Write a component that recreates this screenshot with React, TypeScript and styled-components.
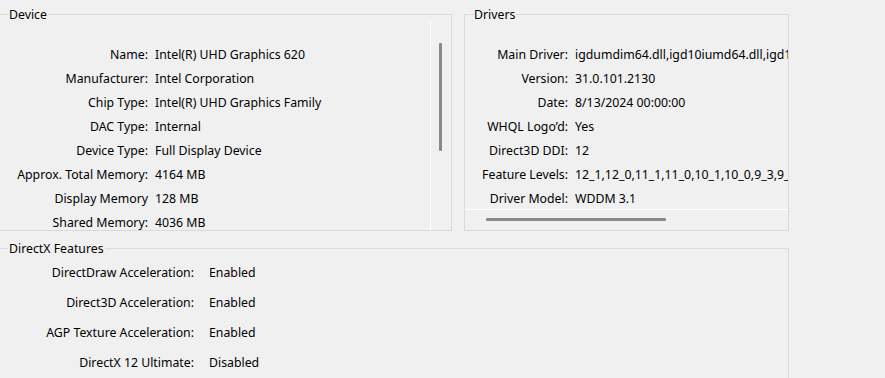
import styled, { createGlobalStyle } from "styled-components";

const GlobalStyle = createGlobalStyle`
	html, body {
		margin: 0;
		padding: 0;
		background: #f0f0f0;
		overflow: hidden;
	}
	body {
		font-family: "Noto Sans", "Segoe UI", sans-serif;
		font-size: 12.3px;
		color: #000;
	}
`;

const Page = styled.div`
	width: 885px;
	height: 378px;
	margin-left: -1px;
	padding-top: 14px;
	box-sizing: border-box;
	display: flex;
	flex-direction: column;
	gap: 17px;
	overflow: hidden;
`;

const TopRow = styled.div`
	display: flex;
	gap: 12px;
	align-items: flex-start;
`;

const Group = styled.section<{ w: number; h?: number }>`
	position: relative;
	width: ${(p) => p.w}px;
	height: ${(p) => (p.h ? p.h + "px" : "auto")};
	box-sizing: border-box;
	border: 1px solid #dadada;
	flex-shrink: 0;
`;

const Legend = styled.span`
	position: absolute;
	top: -8px;
	left: 8px;
	padding: 0 1px;
	line-height: 15px;
	background: #f0f0f0;
	white-space: nowrap;
`;

const ListView = styled.div<{ dir: "row" | "column" }>`
	margin-top: 7px;
	height: 208px;
	display: flex;
	flex-direction: ${(p) => p.dir};
	overflow: hidden;
`;

const Rows = styled.div<{ labelW: number; gap: number; rowH: number; top: number }>`
	flex: 1;
	min-width: 0;
	min-height: 0;
	overflow: hidden;
	padding-top: ${(p) => p.top}px;
	display: grid;
	grid-template-columns: ${(p) => p.labelW}px 1fr;
	grid-auto-rows: ${(p) => p.rowH}px;
	column-gap: ${(p) => p.gap}px;
	align-content: start;
	line-height: ${(p) => p.rowH}px;
`;

const Label = styled.div`
	text-align: right;
	white-space: nowrap;
`;

const Value = styled.div`
	white-space: nowrap;
	overflow: hidden;
`;

const VScroll = styled.div`
	width: 21px;
	flex-shrink: 0;
	border-left: 1px solid #ffffff;
	box-sizing: border-box;
	padding: 21px 0 0 8px;
`;

const VThumb = styled.div`
	width: 3px;
	height: 108px;
	border-radius: 1px;
	background: #898989;
`;

const HScroll = styled.div`
	height: 21px;
	flex-shrink: 0;
	border-top: 1px solid #ffffff;
	box-sizing: border-box;
	padding: 8px 0 0 21px;
`;

const HThumb = styled.div`
	width: 180px;
	height: 3px;
	border-radius: 1px;
	background: #898989;
`;

const device: [string, string][] = [
	["Name:", "Intel(R) UHD Graphics 620"],
	["Manufacturer:", "Intel Corporation"],
	["Chip Type:", "Intel(R) UHD Graphics Family"],
	["DAC Type:", "Internal"],
	["Device Type:", "Full Display Device"],
	["Approx. Total Memory:", "4164 MB"],
	["Display Memory", "128 MB"],
	["Shared Memory:", "4036 MB"],
];

const drivers: [string, string][] = [
	["Main Driver:", "igdumdim64.dll,igd10iumd64.dll,igd10iumd64.dll,igd12umd64.dll"],
	["Version:", "31.0.101.2130"],
	["Date:", "8/13/2024 00:00:00"],
	["WHQL Logo’d:", "Yes"],
	["Direct3D DDI:", "12"],
	["Feature Levels:", "12_1,12_0,11_1,11_0,10_1,10_0,9_3,9_2,9_1"],
	["Driver Model:", "WDDM 3.1"],
];

const features: [string, string][] = [
	["DirectDraw Acceleration:", "Enabled"],
	["Direct3D Acceleration:", "Enabled"],
	["AGP Texture Acceleration:", "Enabled"],
	["DirectX 12 Ultimate:", "Disabled"],
];

function renderRows(items: [string, string][]) {
	return items.map(([label, value]) => [
		<Label key={label}>{label}</Label>,
		<Value key={label + "-v"}>{value}</Value>,
	]);
}

export default function App() {
	return (
		<>
			<GlobalStyle />
			<Page>
				<TopRow>
					<Group w={453} h={217}>
						<Legend>Device</Legend>
						<ListView dir="row">
							<Rows labelW={148} gap={7} rowH={24} top={21}>
								{renderRows(device)}
							</Rows>
							<VScroll>
								<VThumb />
							</VScroll>
						</ListView>
					</Group>
					<Group w={325} h={217}>
						<Legend>Drivers</Legend>
						<ListView dir="column">
							<Rows labelW={103} gap={7} rowH={24} top={21}>
								{renderRows(drivers)}
							</Rows>
							<HScroll>
								<HThumb />
							</HScroll>
						</ListView>
					</Group>
				</TopRow>
				<Group w={790} h={200}>
					<Legend>DirectX Features</Legend>
					<Rows labelW={194} gap={15} rowH={30} top={9}>
						{renderRows(features)}
					</Rows>
				</Group>
			</Page>
		</>
	);
}
